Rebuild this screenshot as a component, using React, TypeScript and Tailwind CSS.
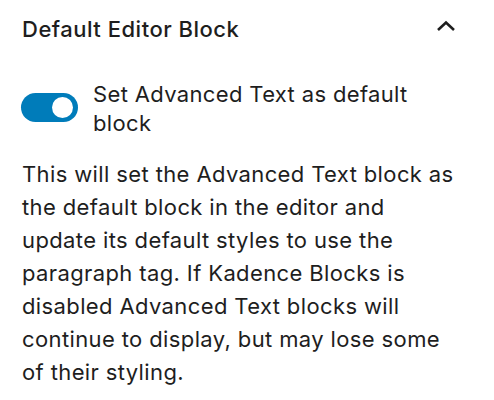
import React, { useState } from 'react';

export default function App() {
    const [enabled, setEnabled] = useState(true);

    return (
        <div className="w-[494px] h-[400px] bg-white text-[#1e1e1e] font-['Inter',sans-serif] overflow-hidden">
            <div className="flex items-center justify-between pl-[22px] pr-[38px] pt-[13px]">
                <h2 className="text-[22px] leading-[32px] font-medium tracking-[0.5px]">Default Editor Block</h2>
                <svg width="20" height="12" viewBox="0 0 20 12" fill="none" className="mt-[-6px]">
                    <path d="M2 10 L10 2.5 L18 10" stroke="#1e1e1e" strokeWidth="2.6" />
                </svg>
            </div>

            <div className="flex items-start pl-[21px] pt-[35px]">
                <button
                    onClick={() => setEnabled(!enabled)}
                    className={`mt-[13px] w-[57px] h-[29px] rounded-full flex items-center px-[5px] shrink-0 ${
                        enabled ? 'bg-[#007cba] justify-end' : 'bg-white border-2 border-[#1e1e1e] justify-start'
                    }`}
                >
                    <span className={`w-[21px] h-[21px] rounded-full ${enabled ? 'bg-white' : 'bg-[#1e1e1e]'}`} />
                </button>
                <span className="ml-[15px] text-[22px] leading-[29px] tracking-[0.35px] w-[340px]">
                    Set Advanced Text as default block
                </span>
            </div>

            <p className="pl-[22px] w-[462px] pt-[20px] text-[22px] leading-[33px] tracking-[0.38px]">
                This will set the Advanced Text block as the default block in the editor and update its default
                styles to use the paragraph tag. If Kadence Blocks is disabled Advanced Text blocks will continue to
                display, but may lose some of their styling.
            </p>
        </div>
    );
}
